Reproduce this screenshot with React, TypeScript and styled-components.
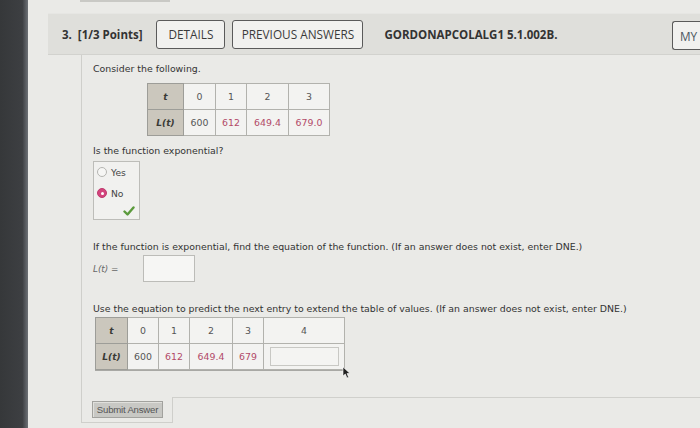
import React from "react";
import styled, { createGlobalStyle } from "styled-components";

const Global = createGlobalStyle`
  html, body { margin: 0; padding: 0; background: #e9e9e6; }
  body { width: 700px; height: 428px; overflow: hidden; }
  * { box-sizing: border-box; }
`;

const Page = styled.div`
  display: flex;
  width: 700px;
  height: 428px;
  background: #eaeae7;
  overflow: hidden;
`;

const SideBar = styled.div`
  width: 28px;
  flex-shrink: 0;
  background: linear-gradient(90deg, #36383a 0%, #3d3f42 80%, #6d7176 100%);
`;

const Main = styled.div`
  flex: 1;
  display: flex;
  flex-direction: column;
  min-width: 0;
`;

const TopStrip = styled.div`
  height: 13px;
  padding-left: 52px;
`;

const TopTab = styled.div`
  width: 90px;
  height: 2px;
  background: #c9c9c5;
`;

const Header = styled.div`
  margin-left: 20px;
  height: 42px;
  background: #dfdfdb;
  border-top: 1px solid #e6e6e3;
  border-bottom: 1px solid #d2d2ce;
  display: flex;
  align-items: center;
  padding-left: 14px;
  overflow: hidden;
  font-family: "Open Sans", "Liberation Sans", sans-serif;
  color: #333;
`;

const Title = styled.div`
  font-weight: 700;
  font-size: 11.5px;
  margin-right: 14px;
  white-space: nowrap;
`;

const HeadButton = styled.div<{ $w: number; $ml?: number }>`
  flex-shrink: 0;
  width: ${(p) => p.$w}px;
  height: 29px;
  margin-left: ${(p) => p.$ml ?? 0}px;
  border: 1.5px solid #5a5a5a;
  border-radius: 3px;
  background: #f1f1ef;
  display: flex;
  align-items: center;
  justify-content: center;
  font-size: 11.8px;
  font-weight: 500;
  color: #3a3a3a;
  white-space: nowrap;
`;

const MyButton = styled(HeadButton)`
  margin-left: auto;
  justify-content: flex-start;
  padding-left: 7px;
  margin-top: 3px;
  border-right: none;
  border-radius: 3px 0 0 3px;
  color: #4a5560;
`;

const QId = styled.div`
  margin-left: 21px;
  font-weight: 700;
  font-size: 11.5px;
  white-space: nowrap;
`;

const Panel = styled.div`
  margin-left: 53px;
  border-left: 1px solid #cfcfcb;
  padding: 8px 0 0 11px;
  height: 342px;
  font-family: "DejaVu Sans", Verdana, sans-serif;
  font-size: 9.4px;
  color: #333;
`;

const Para = styled.div<{ $mt: number }>`
  margin-top: ${(p) => p.$mt}px;
  white-space: nowrap;
  line-height: 11px;
`;

const Table = styled.table<{ $ml: number; $mt: number }>`
  margin-left: ${(p) => p.$ml}px;
  margin-top: ${(p) => p.$mt}px;
  border-collapse: collapse;
  border: 1.5px solid #a8a8a4;
  position: relative;
`;

const HeadCell = styled.td<{ $w: number }>`
  width: ${(p) => p.$w}px;
  height: 26px;
  background: #cbc7bd;
  border: 1px solid #9d9d98;
  text-align: center;
  font-weight: 700;
  font-style: italic;
  font-size: 9px;
  color: #3a3a36;
  padding: 0;
`;

const Cell = styled.td<{ $w: number; $red?: boolean }>`
  width: ${(p) => p.$w}px;
  height: 26px;
  background: #f3f3f1;
  border: 1px solid #b2b2ad;
  text-align: center;
  font-size: 9.4px;
  color: ${(p) => (p.$red ? "#b24a68" : "#555")};
  padding: 0;
`;

const RadioBox = styled.div`
  margin-top: 5px;
  width: 47px;
  height: 59px;
  border: 1px solid #bdbdb9;
  background: #f1f1ef;
  padding: 4px 0 0 3px;
  display: flex;
  flex-direction: column;
  gap: 9px;
  position: relative;
`;

const RadioRow = styled.div`
  display: flex;
  align-items: center;
  gap: 4px;
  font-size: 9.2px;
  color: #444;
  height: 12px;
`;

const Radio = styled.span<{ $on?: boolean }>`
  width: 10px;
  height: 10px;
  border-radius: 50%;
  flex-shrink: 0;
  background: ${(p) => (p.$on ? "#d3457d" : "#f6f6f4")};
  border: 1px solid ${(p) => (p.$on ? "#c03a6e" : "#b5b5b1")};
  display: flex;
  align-items: center;
  justify-content: center;
  &::after {
    content: "";
    width: 3px;
    height: 3px;
    border-radius: 50%;
    background: ${(p) => (p.$on ? "#fff" : "transparent")};
  }
`;

const Check = styled.svg`
  position: absolute;
  right: 4px;
  bottom: 3px;
`;

const EqRow = styled.div`
  margin-top: 3px;
  display: flex;
  align-items: center;
`;

const EqLabel = styled.span`
  font-style: italic;
  color: #666;
  font-size: 8.8px;
  width: 50px;
`;

const AnswerInput = styled.div`
  width: 52px;
  height: 27px;
  border: 1px solid #bcbcb8;
  background: #f6f6f4;
`;

const CellInput = styled.div`
  margin: 0 auto;
  width: 69px;
  height: 19px;
  border: 1px solid #c8c8c4;
  background: #f4f4f2;
`;

const Cursor = styled.svg`
  position: absolute;
  right: -6px;
  bottom: -8px;
`;

const Footer = styled.div`
  margin-left: 53px;
  display: flex;
  height: 26px;
`;

const SubmitArea = styled.div`
  width: 92px;
  border-left: 1px solid #cfcfcb;
  border-right: 1px solid #cfcfcb;
  border-bottom: 1px solid #cfcfcb;
  padding: 4px 0 0 10px;
`;

const SubmitButton = styled.div`
  width: 71px;
  height: 17px;
  background: #c8c8c4;
  border: 1px solid #a2a29e;
  box-shadow: inset 1px 1px 0 #e0e0dc;
  font-family: "Liberation Sans", Arial, sans-serif;
  font-size: 9.6px;
  color: #555;
  display: flex;
  align-items: center;
  justify-content: center;
  letter-spacing: -0.2px;
`;

const Filler = styled.div`
  flex: 1;
  border-top: 1.5px solid #d0d0cc;
`;

export default function App() {
  return (
    <>
      <Global />
      <Page>
        <SideBar />
        <Main>
          <TopStrip>
            <TopTab />
          </TopStrip>
          <Header>
            <Title>3.&nbsp; [1/3 Points]</Title>
            <HeadButton $w={69}>DETAILS</HeadButton>
            <HeadButton $w={131} $ml={7}>PREVIOUS ANSWERS</HeadButton>
            <QId>GORDONAPCOLALG1 5.1.002B.</QId>
            <MyButton $w={28}>MY</MyButton>
          </Header>
          <Panel>
            <Para $mt={0}>Consider the following.</Para>
            <Table $ml={54} $mt={9}>
              <tbody>
                <tr>
                  <HeadCell $w={36}>t</HeadCell>
                  <Cell $w={32}>0</Cell>
                  <Cell $w={31}>1</Cell>
                  <Cell $w={42}>2</Cell>
                  <Cell $w={41}>3</Cell>
                </tr>
                <tr>
                  <HeadCell $w={36}>L(t)</HeadCell>
                  <Cell $w={32}>600</Cell>
                  <Cell $w={31} $red>612</Cell>
                  <Cell $w={42} $red>649.4</Cell>
                  <Cell $w={41} $red>679.0</Cell>
                </tr>
              </tbody>
            </Table>
            <Para $mt={9}>Is the function exponential?</Para>
            <RadioBox>
              <RadioRow>
                <Radio />
                Yes
              </RadioRow>
              <RadioRow>
                <Radio $on />
                No
              </RadioRow>
              <Check width="12" height="10" viewBox="0 0 12 10">
                <polyline points="1.5,5.5 4.5,8.5 10.5,1.5" fill="none" stroke="#5b9a3c" strokeWidth="2.4" strokeLinecap="round" strokeLinejoin="round" />
              </Check>
            </RadioBox>
            <Para $mt={21}>
              If the function is exponential, find the equation of the function. (If an answer does not exist, enter DNE.)
            </Para>
            <EqRow>
              <EqLabel>L(t) =</EqLabel>
              <AnswerInput />
            </EqRow>
            <Para $mt={21}>
              Use the equation to predict the next entry to extend the table of values. (If an answer does not exist, enter DNE.)
            </Para>
            <Table $ml={2} $mt={3}>
              <tbody>
                <tr>
                  <HeadCell $w={32}>t</HeadCell>
                  <Cell $w={31}>0</Cell>
                  <Cell $w={31}>1</Cell>
                  <Cell $w={43}>2</Cell>
                  <Cell $w={31}>3</Cell>
                  <Cell $w={81}>4</Cell>
                </tr>
                <tr>
                  <HeadCell $w={32}>L(t)</HeadCell>
                  <Cell $w={31}>600</Cell>
                  <Cell $w={31} $red>612</Cell>
                  <Cell $w={43} $red>649.4</Cell>
                  <Cell $w={31} $red>679</Cell>
                  <Cell $w={81}>
                    <CellInput />
                  </Cell>
                </tr>
              </tbody>
              <Cursor width="9" height="13" viewBox="0 0 9 13">
                <path d="M1 1 L1 10 L3.3 8 L5 12 L6.6 11.3 L5 7.5 L8 7.5 Z" fill="#222" stroke="#fff" strokeWidth="0.6" />
              </Cursor>
            </Table>
          </Panel>
          <Footer>
            <SubmitArea>
              <SubmitButton>Submit Answer</SubmitButton>
            </SubmitArea>
            <Filler />
          </Footer>
        </Main>
      </Page>
    </>
  );
}
